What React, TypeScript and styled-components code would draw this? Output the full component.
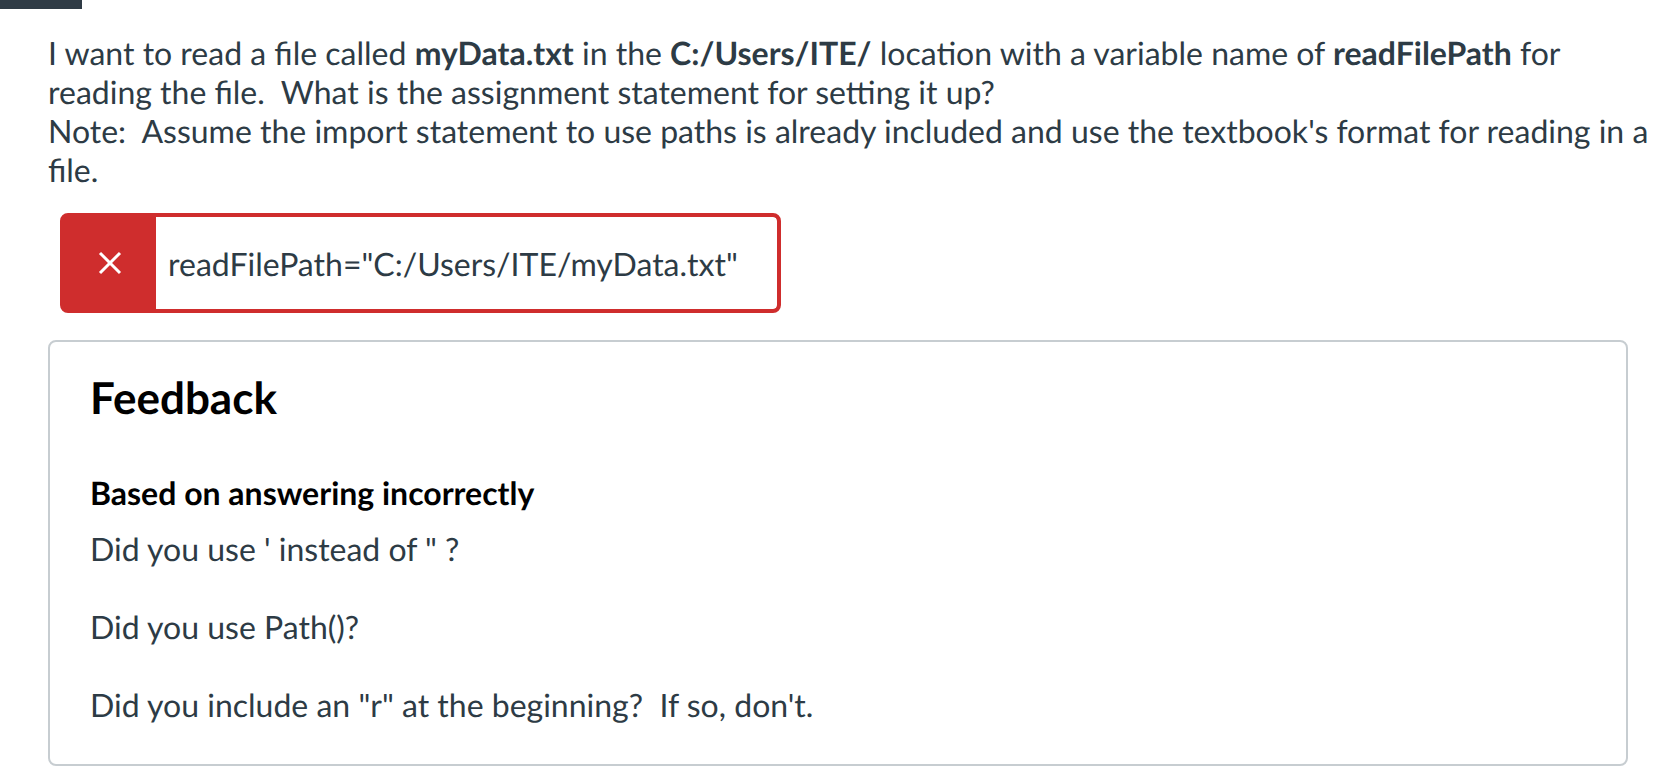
import React from "react";
import styled, { createGlobalStyle } from "styled-components";

const Global = createGlobalStyle`
  * { box-sizing: border-box; }
  body {
    margin: 0; background: #fff; color: #2d3b45;
    font-family: Lato, "Liberation Sans", sans-serif; font-size: 32px; line-height: 39px;
    text-rendering: geometricPrecision;
  }
`;
const Tab = styled.div`
  width: 82px; height: 9px; background: #2f3b45;
`;
const Page = styled.main`
  padding: 24px 36px 0 48px;
`;
const Prompt = styled.p`
  margin: 0 -24px 0 0;
`;
const Answer = styled.div`
  display: flex; width: 721px; max-width: 100%; height: 100px; margin: 24px 0 0 12px;
  border: 4px solid #cf2d2d; border-radius: 8px; background: #cf2d2d; overflow: hidden;
`;
const Mark = styled.div`
  flex: 0 0 92px; display: flex; align-items: center; justify-content: center;
`;
const Field = styled.input`
  flex: 1; min-width: 0; border: 0; border-radius: 0 4px 4px 0; padding: 0 12px; background: #fff;
  color: inherit; font: inherit; text-rendering: inherit; outline: 0;
`;
const Feedback = styled.section`
  margin-top: 27px; padding: 30px 40px 40px; border: 2px solid #c7cdd1; border-radius: 8px;
`;
const Title = styled.h2`
  margin: 0 0 49px; color: #000; font-size: 44px; line-height: 52px;
`;
const Subtitle = styled.h3`
  margin: 0 0 17px; color: #000; font-size: 32px; line-height: 39px;
`;
const Hint = styled.p`
  margin: 0 0 39px;
  &:last-child { margin-bottom: 0; }
`;

const hints = [
  "Did you use ' instead of \" ?",
  "Did you use Path()?",
  "Did you include an \"r\" at the beginning?\u00a0 If so, don't.",
];

export default function App() {
  return (
    <>
      <Global />
      <Tab />
      <Page>
        <Prompt>
          I want to read a file called <b>myData.txt</b> in the <b>C:/Users/ITE/</b> location with a
          variable name of <b>readFilePath</b> for reading the file.&nbsp; What is the assignment
          statement for setting it up?
        </Prompt>
        <Prompt>
          Note:&nbsp; Assume the import statement to use paths is already included and use the
          textbook's format for reading in a file.
        </Prompt>
        <Answer>
          <Mark>
            <svg width="24" height="24" viewBox="0 0 24 24" aria-hidden="true">
              <path d="M2 2L22 22M22 2L2 22" stroke="#fff" strokeWidth="3" fill="none" />
            </svg>
          </Mark>
          <Field aria-label="Your answer" readOnly defaultValue={'readFilePath="C:/Users/ITE/myData.txt"'} />
        </Answer>
        <Feedback>
          <Title>Feedback</Title>
          <Subtitle>Based on answering incorrectly</Subtitle>
          {hints.map((hint) => (
            <Hint key={hint}>{hint}</Hint>
          ))}
        </Feedback>
      </Page>
    </>
  );
}
